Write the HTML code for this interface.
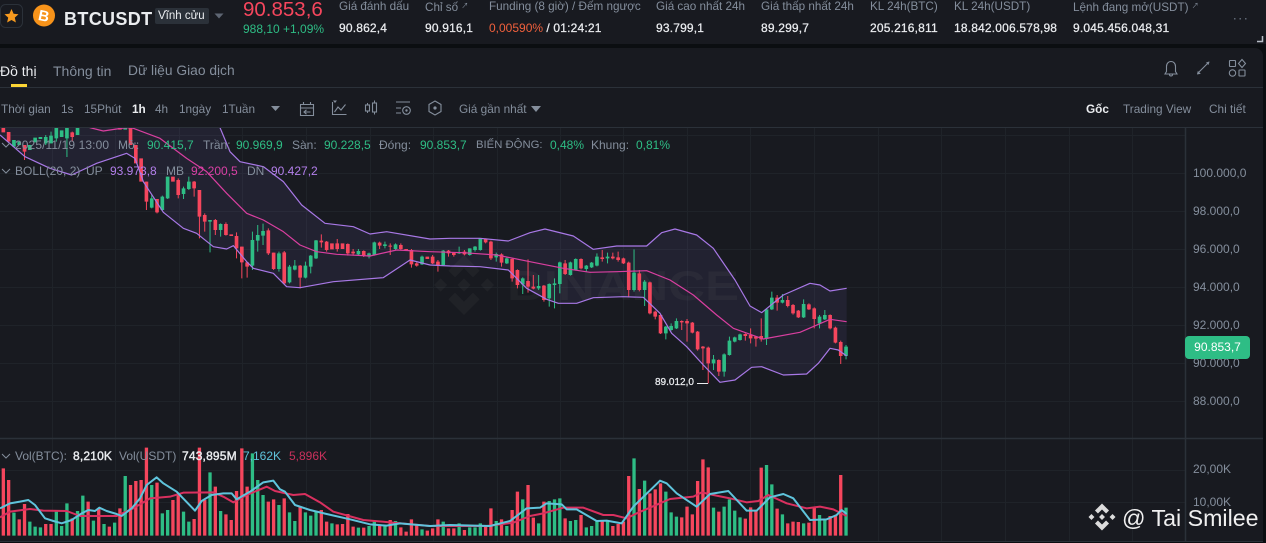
<!DOCTYPE html>
<html lang="vi"><head><meta charset="utf-8"><title>BTCUSDT</title>
<style>
*{box-sizing:border-box}
html,body{margin:0;padding:0;width:1266px;height:543px;overflow:hidden;background:#0b0e11}
body{position:relative;font-family:"Liberation Sans","Noto Sans CJK SC",sans-serif;font-size:12px;color:#848e9c}
.t{position:absolute;white-space:nowrap;line-height:14px;height:14px}
.l{font-size:11.7px}
.k{font-size:11.8px}
.w{color:#eaecef}
.g{color:#2ebd85}.r{color:#f6465d}.p{color:#b37feb}.m{color:#d940a5}
.v{color:#eaecef;-webkit-text-stroke:.25px #eaecef;letter-spacing:.18px}
#top{position:absolute;left:0;top:0;width:1266px;height:44px;background:#181a20}
#panel{position:absolute;left:0;top:48px;width:1263px;height:493px;background:#181a20;border-top-right-radius:8px}
.hl{position:absolute;left:0;width:1263px;height:1px;background:#2b3139}
svg{position:absolute;left:0;top:0}
</style></head><body>
<div id="top"></div><div id="panel"></div>
<div class="hl" style="top:87px"></div>
<div class="hl" style="top:127px"></div>

<svg width="1266" height="543" viewBox="0 0 1266 543" style="z-index:1">
<defs><clipPath id="c"><rect x="0" y="128" width="1185" height="310"/></clipPath></defs>
<g stroke="#1f2329" stroke-width="1" fill="none">
<path d="M52.5 128V541M115.5 128V541M179.5 128V541M242.5 128V541M306.5 128V541M370.5 128V541M433.5 128V541M497.5 128V541M560.5 128V541M623.5 128V541M687.5 128V541M750.5 128V541M814.5 128V541M878.5 128V541M941.5 128V541M1005.5 128V541M1069.5 128V541M1132.5 128V541"/>
<path d="M0 135.5H1185M0 173.5H1185M0 211.5H1185M0 249.5H1185M0 287.5H1185M0 325.5H1185M0 363.5H1185M0 401.5H1185M0 470.5H1185M0 502.5H1185"/>
</g>
<path d="M1185.5 128V541M0 438.5H1263" stroke="#2b3139" stroke-width="1.5" fill="none"/>
<path d="M0 541.5H1263" stroke="#2b3139" stroke-width="1" fill="none"/>
<!-- chart watermark -->
<g fill="#ffffff" fill-opacity=".035">
<path transform="translate(464,285) scale(.6)" d="M0-11 11 0 0 11-11 0ZM-50 0-39-11-28 0-39 11ZM50 0 39-11 28 0 39 11ZM0-50 26-24 15-13 0-28-15-13-26-24ZM0 50 26 24 15 13 0 28-15 13-26 24Z"/>
<text x="507" y="300" font-family="Liberation Sans" font-weight="700" font-size="42" textLength="232" lengthAdjust="spacingAndGlyphs">BINANCE</text>
</g>
<g clip-path="url(#c)">
<g transform="translate(0,125) scale(.33333)">
<path fill="#9b7fe8" fill-opacity=".085" d="M0 0H640L660 8 690 80 720 110 790 125 850 170 905 240 975 295 1060 305 1110 327 1160 320 1290 342 1350 340 1440 340 1525 348 1590 323 1635 312 1720 333 1780 373 1850 363 1940 363 1985 323 2025 312 2090 330 2140 370 2205 465 2250 543 2285 563 2350 510 2430 475 2460 480 2490 498 2540 490V693L2515 675 2490 670 2455 715 2420 747 2350 750 2285 725 2255 727 2205 765 2160 772 2110 720 2060 665 2015 625 1980 565 1930 517 1870 515 1780 518 1730 535 1675 535 1640 523 1580 490 1525 435 1440 425 1350 423 1290 420 1230 405 1200 425 1150 458 1000 470 900 488 860 485 820 445 760 430 740 410 700 362 680 372 640 365 590 325 550 310 490 262 430 170 405 100 380 85 290 115 215 150 150 130 75 95 0 30Z"/>
</g>
<!-- candles left -->
<g transform="translate(3.33,125) scale(.33125,.33333)" fill="none">
<path stroke="#2ebd85" stroke-width="3" d="M144 20V55M192 8V96M160 8V50M128 30V60M448 210V250M480 212V258M496 155V222M544 185V222M560 155V195M624 285V382M656 295V335M752 320V435M768 300V380M784 296V360M832 380V440M864 420V475M880 405V436M912 410V460M928 390V445M944 345V402M1072 372V390M1104 383V400M1120 350V392M1152 350V370M1184 355V375M1264 392V420"/>
<path stroke="#2ebd85" stroke-width="11" d="M32 45V65M48 50V60M80 60V75M96 38V52M112 36V42M128 36V55M144 32V55M160 8V40M176 16V36M192 8V40M224 8V30M368 8V14M448 220V248M480 215V255M496 155V220M544 190V207M560 170V192M624 285V290M656 297V315M752 345V422M768 330V347M784 318V332M832 385V432M864 425V472M880 422V434M912 422V458M928 392V425M944 346V400M1072 378V388M1104 385V395M1120 352V390M1152 358V363M1184 358V372M1264 395V418"/>
<path stroke="#f6465d" stroke-width="3" d="M64 60V105M208 20V50M432 170V255M464 222V265M528 160V220M576 168V215M592 195V340M608 265V320M640 282V330M672 292V332M704 322V400M720 365V460M736 410V458M800 310V390M816 383V435M848 378V478M896 420V490M960 328V368M976 348V380M1008 342V380M1040 355V392M1056 372V392M1088 376V396M1136 350V372M1168 355V390M1200 355V375M1232 372V428M1248 412V425"/>
<path stroke="#f6465d" stroke-width="11" d="M0 8V22M16 21V50M64 60V80M208 22V36M352 8V14M384 8V60M400 60V115M416 100V170M432 170V230M464 222V262M512 155V170M528 165V210M576 170V190M592 195V275M608 270V290M640 285V315M672 297V330M688 328V333M704 333V370M720 365V412M736 412V425M800 316V385M816 383V432M848 382V475M896 422V458M960 347V352M976 350V375M992 355V373M1008 355V372M1024 355V372M1040 357V385M1056 380V385M1088 378V393M1136 353V362M1168 362V365M1200 360V372M1216 372V378M1232 375V418M1248 415V422M1280 395V402"/>
</g>
<!-- candles right -->
<g transform="translate(432.63,220) scale(.33125,.33333)" fill="none">
<path stroke="#2ebd85" stroke-width="3" d="M32 90V137M80 80V102M112 85V107M128 78V95M144 55V92M192 98V125M224 110V132M272 172V222M320 165V210M352 190V260M368 175V265M384 125V220M416 125V167M432 115V152M464 135V155M480 126V144M496 100V139M528 98V130M608 88V215M640 180V258M704 318V358M720 310V332M736 295V327M848 405V450M880 400V470M896 350V407M912 350V367M928 341V362M1008 266V375M1024 215V270M1056 222V250M1120 238V294M1168 285V325M1184 270V300M1248 375V418"/>
<path stroke="#2ebd85" stroke-width="11" d="M32 92V135M80 97V100M112 85V105M128 80V90M144 55V90M192 102V112M224 115V130M272 175V193M320 198V205M352 192V235M368 190V195M384 127V192M416 127V165M432 117V150M464 137V147M480 128V142M496 110V137M528 110V115M608 158V210M640 185V210M704 320V340M720 318V330M736 303V325M848 418V430M880 403V455M896 362V405M912 352V365M928 343V360M1008 268V357M1024 233V268M1056 240V248M1120 252V292M1168 290V310M1184 285V298M1248 380V408"/>
<path stroke="#f6465d" stroke-width="3" d="M0 105V132M16 120V155M48 90V110M64 96V110M96 90V106M160 55V70M176 62V120M208 100V140M240 115V185M256 148V205M288 118V218M304 165V208M336 195V245M400 120V165M448 115V148M512 90V125M544 98V118M560 95V125M576 113V132M592 125V232M624 150V214M656 185V283M672 272V298M688 282V342M752 301V330M768 297V365M784 306V340M800 333V392M816 378V450M832 380V490M864 418V468M944 340V362M960 325V370M976 348V380M992 295V365M1040 225V272M1072 228V262M1088 252V284M1104 270V294M1136 250V270M1152 262V325M1200 283V328M1216 320V370M1232 362V432"/>
<path stroke="#f6465d" stroke-width="11" d="M0 110V130M16 125V135M48 92V100M64 98V105M96 95V103M160 57V67M176 65V115M208 103V128M240 117V175M256 150V195M288 183V200M304 200V206M336 197V240M400 130V162M448 117V145M512 112V117M544 110V115M560 112V120M576 115V130M592 128V210M624 160V210M656 187V280M672 275V290M688 285V340M752 303V307M768 303V310M784 308V338M800 335V388M816 380V385M832 383V430M864 420V455M944 342V348M960 345V355M976 350V356M992 348V358M1040 233V248M1072 240V258M1088 255V280M1104 272V292M1136 253V268M1152 265V297M1200 285V325M1216 323V368M1232 366V408"/>
</g>
<!-- bollinger -->
<g transform="translate(0,125) scale(.33333)" fill="none" stroke-width="3.6" stroke-linejoin="round">
<path stroke="#a878e6" d="M640-20 660 8 690 80 720 110 790 125 850 170 905 240 975 295 1060 305 1110 327 1160 320 1290 342 1350 340 1440 340 1525 348 1590 323 1635 312 1720 333 1780 373 1850 363 1940 363 1985 323 2025 312 2090 330 2140 370 2205 465 2250 543 2285 563 2350 510 2430 475 2460 480 2490 498 2540 490"/>
<path stroke="#a878e6" d="M0 30 75 95 150 130 215 150 290 115 380 85 405 100 430 170 490 262 550 310 590 325 640 365 680 372 700 362 740 410 760 430 820 445 860 485 900 488 1000 470 1150 458 1200 425 1230 405 1290 420 1350 423 1440 425 1525 435 1580 490 1640 523 1675 535 1730 535 1780 518 1870 515 1930 517 1980 565 2015 625 2060 665 2110 720 2160 772 2205 765 2255 727 2285 725 2350 750 2420 747 2455 715 2490 670 2515 675 2540 693"/>
<path stroke="#d93fa0" d="M240-5 270 8 310 18 350 12 380 8 400 10 480 40 560 100 620 140 680 205 740 265 790 285 850 320 900 360 950 380 1010 388 1110 393 1190 375 1290 380 1390 383 1490 390 1590 410 1690 430 1770 442 1850 440 1940 437 2010 465 2080 510 2150 570 2200 610 2290 642 2400 622 2490 583 2540 590"/>
</g>
</g>
<!-- volume -->
<g transform="translate(3.33,440) scale(.33125,.33333)" fill="none" stroke-width="10">
<path stroke="#2ebd85" d="M32 218V287M80 245V287M96 260V287M112 262V287M160 215V287M176 258V287M192 190V287M224 213V287M240 167V287M272 242V287M304 252V287M336 248V287M368 108V287M448 135V287M480 220V287M496 210V287M544 215V287M560 245V287M624 97V287M656 213V287M752 40V287M768 120V287M784 165V287M832 195V287M864 217V287M880 243V287M912 217V287M928 227V287M944 215V287M992 250V287M1072 263V287M1104 258V287M1120 245V287M1152 255V287M1184 243V287M1264 268V287"/>
<path stroke="#f6465d" d="M0 85V287M16 120V287M48 238V287M64 192V287M128 252V287M144 252V287M208 235V287M256 185V287M288 205V287M320 260V287M352 205V287M384 135V287M400 123V287M416 120V287M432 23V287M464 128V287M512 180V287M528 160V287M576 237V287M592 23V287M608 180V287M640 140V287M672 223V287M688 240V287M704 153V287M720 25V287M736 140V287M800 185V287M816 178V287M848 175V287M896 200V287M960 210V287M976 245V287M1008 253V287M1024 252V287M1040 222V287M1056 260V287M1088 263V287M1136 255V287M1168 240V287M1200 262V287M1216 275V287M1232 238V287M1248 252V287M1280 272V287"/>
</g>
<g transform="translate(432.63,440) scale(.33125,.33333)" fill="none" stroke-width="10">
<path stroke="#2ebd85" d="M32 245V287M80 250V287M112 262V287M128 262V287M144 250V287M192 243V287M224 258V287M272 178V287M320 250V287M352 183V287M368 178V287M384 175V287M416 243V287M432 240V287M464 262V287M480 258V287M496 243V287M528 243V287M608 55V287M640 122V287M704 155V287M720 217V287M736 230V287M848 203V287M880 200V287M896 178V287M912 212V287M928 232V287M1008 75V287M1024 133V287M1056 223V287M1120 250V287M1168 225V287M1184 240V287M1248 203V287"/>
<path stroke="#f6465d" d="M0 265V287M16 238V287M48 265V287M64 265V287M96 270V287M160 260V287M176 205V287M208 238V287M240 210V287M256 155V287M288 135V287M304 233V287M336 185V287M400 235V287M448 225V287M512 242V287M544 258V287M560 252V287M576 245V287M592 108V287M624 147V287M656 160V287M672 148V287M688 130V287M752 232V287M768 200V287M784 223V287M800 123V287M816 58V287M832 82V287M864 215V287M944 236V287M960 202V287M976 212V287M992 83V287M1040 206V287M1072 250V287M1088 245V287M1104 246V287M1136 248V287M1152 203V287M1200 228V287M1216 228V287M1232 105V287"/>
</g>
<g transform="translate(0,440) scale(.33333)" fill="none" stroke-width="6" stroke-linejoin="round">
<path stroke="#d9305f" d="M0 232 30 215 90 207 130 212 200 213 240 228 350 228 400 205 450 175 510 170 550 158 640 157 670 170 700 187 740 165 800 140 825 153 880 165 915 162 960 187 1000 215 1090 240 1170 247 1290 258 1390 258 1460 258 1540 248 1590 228 1630 220 1690 203 1750 203 1810 225 1840 225 1880 235 1910 220 1980 190 2010 177 2080 170 2105 157 2140 165 2190 175 2240 187 2275 183 2305 165 2360 190 2420 205 2460 200 2500 208 2540 228"/>
<path stroke="#5fc4dc" d="M0 205 30 190 60 185 85 180 105 195 135 235 160 243 185 250 215 240 245 220 265 210 285 213 298 203 320 213 350 222 365 228 395 205 420 175 440 135 470 112 490 130 530 155 585 212 605 183 635 165 670 160 695 160 710 178 750 155 790 127 820 122 840 148 855 155 885 195 930 210 980 222 1050 238 1110 253 1160 257 1200 250 1290 258 1350 255 1470 258 1530 243 1580 205 1620 203 1640 190 1685 193 1700 208 1730 208 1790 243 1820 242 1865 250 1900 200 1980 122 2000 130 2030 160 2090 200 2130 162 2185 153 2240 212 2270 212 2310 172 2350 162 2380 175 2430 240 2480 238 2510 225 2525 210 2540 222"/>
</g>
<!-- low marker -->
<path d="M697 383.5H708" stroke="#eaecef" stroke-width="1"/>
<!-- header icons -->
<rect x=".5" y="4.5" width="22" height="23" rx="5" fill="#181a20" stroke="#2b3139"/>
<polygon points="11.5,9 13.6,13.8 18.5,14.3 14.8,17.6 15.9,22.5 11.5,20 7.1,22.5 8.2,17.6 4.5,14.3 9.4,13.8" fill="#f79a1e"/>
<circle cx="44" cy="15.5" r="11" fill="#f7931a"/>
<text x="44" y="21" text-anchor="middle" font-family="Liberation Sans" font-weight="700" font-size="15" fill="#fff" transform="rotate(12 44 15.5)">B</text>
<path d="M214.5 13.5H223.5L219 18.5Z" fill="#5e6673"/>
<path d="M1234 18h1.500v1.500h-1.500zM1239.500 18h1.500v1.500h-1.500zM1245 18h1.500v1.500h-1.500z" fill="#5e6673"/>
<path d="M1257 41.500H1262.500V36" stroke="#b7bdc6" stroke-width="1.5" fill="none"/>
<!-- top right icons -->
<g stroke="#848e9c" stroke-width="1.1" fill="none">
<path d="M1165 74H1177L1175.500 71.500V66.500C1175.500 63.500 1173.500 61.500 1171 61.500S1166.500 63.500 1166.500 66.500V71.500ZM1169.500 74.500C1169.500 76.500 1172.500 76.500 1172.500 74.500"/>
<path d="M1197.500 73.500 1209 62"/>
<rect x="1229.5" y="60.5" width="6" height="6" rx=".5"/>
<path d="M1242 59.500 1245.500 63.500 1242 67.500 1238.500 63.500Z"/>
<circle cx="1232.500" cy="73" r="3.2"/>
<rect x="1239" y="70" width="6" height="6" rx=".5"/>
</g>
<path d="M1206 62.500 1209.500 61.500 1208.500 65ZM1197 74.500 1197.800 71 1200.800 73.800Z" fill="#848e9c"/>
<!-- toolbar icons -->
<g stroke="#848e9c" stroke-width="1.1" fill="none">
<path d="M300.500 104.500H313.500V115.500H300.500ZM300.500 108H313.500M303.500 102V105M310.500 102V105M310.500 112H304M306.500 109.800 304 112 306.500 114.200"/>
<path d="M332.500 102V114.500H346.500M334.500 112 338 107 341 110 345.500 104.500"/>
<path d="M367.500 103V113M374.500 100.500V114.500" stroke-width="1"/>
<rect x="365.5" y="105" width="4" height="6" fill="#181a20"/>
<rect x="372.5" y="103" width="4" height="9" fill="#181a20"/>
<path d="M396 102H410M396 108H401M396 113H401"/>
<circle cx="406.5" cy="110.5" r="3.8"/>
<path d="M435 101 441 104.500V111.500L435 115 429 111.500V104.500Z"/>
</g>
<circle cx="406.5" cy="110.5" r="1.2" fill="#848e9c"/>
<circle cx="435" cy="108" r="1.6" fill="#848e9c"/>
<path d="M333 100.500H337L335 103Z" fill="#848e9c"/>
<path d="M271 106H280L275.500 111ZM531 106H541L536 112Z" fill="#848e9c"/>
<!-- chevrons -->
<g stroke="#848e9c" stroke-width="1" fill="none">
<path d="M2 143 6 147 10 143M2 169 6 173 10 169M2 454 6 458 10 454"/>
</g>
<!-- brand watermark -->
<path transform="translate(1102,517) scale(.27)" fill="#dcdcdc" d="M0-11 11 0 0 11-11 0ZM-50 0-39-11-28 0-39 11ZM50 0 39-11 28 0 39 11ZM0-50 26-24 15-13 0-28-15-13-26-24ZM0 50 26 24 15 13 0 28-15 13-26 24Z"/>
</svg>

<div style="position:absolute;left:0;top:0;z-index:2;width:1266px;height:543px">
<div class="t" style="left:64px;top:9px;height:20px;line-height:20px;font-size:18px;font-weight:700;color:#eaecef;letter-spacing:.35px">BTCUSDT</div>
<div class="t w" style="left:155px;top:8px;width:54px;height:16px;line-height:16px;background:#2b3139;border-radius:2px;padding-left:3px;font-size:11.5px">Vĩnh cửu</div>
<div class="t r" style="left:243px;top:-1px;height:22px;line-height:22px;font-size:20.5px">90.853,6</div>
<div class="t g" style="left:243px;top:22px">988,10 +1,09%</div>

<div class="t l" style="left:339px;top:0">Giá đánh dấu</div>
<div class="t v" style="left:339px;top:21px">90.862,4</div>
<div class="t l" style="left:425px;top:0">Chỉ số <span style="font-size:7px;vertical-align:3px">↗</span></div>
<div class="t v" style="left:425px;top:21px">90.916,1</div>
<div class="t l" style="left:489px;top:0">Funding (8 giờ) / Đếm ngược</div>
<div class="t" style="left:489px;top:21px"><span style="color:#f0603c">0,00590%</span> <span class="v">/ 01:24:21</span></div>
<div class="t l" style="left:656px;top:0">Giá cao nhất 24h</div>
<div class="t v" style="left:656px;top:21px">93.799,1</div>
<div class="t l" style="left:761px;top:0">Giá thấp nhất 24h</div>
<div class="t v" style="left:761px;top:21px">89.299,7</div>
<div class="t l" style="left:870px;top:0">KL 24h(BTC)</div>
<div class="t v" style="left:870px;top:21px">205.216,811</div>
<div class="t l" style="left:954px;top:0">KL 24h(USDT)</div>
<div class="t v" style="left:954px;top:21px">18.842.006.578,98</div>
<div class="t l" style="left:1073px;top:0">Lệnh đang mở(USDT) <span style="font-size:7px;vertical-align:3px">↗</span></div>
<div class="t v" style="left:1073px;top:21px">9.045.456.048,31</div>

<div class="t w" style="left:0;top:63px;height:16px;line-height:16px;font-size:14px">Đồ thị</div>
<div style="position:absolute;left:11px;top:84px;width:16px;height:3px;background:#fcd535"></div>
<div class="t" style="left:53px;top:63px;height:16px;line-height:16px;font-size:14px">Thông tin</div>
<div class="t" style="left:128px;top:63px;height:16px;line-height:16px;font-size:13.8px">Dữ liệu Giao dịch</div>

<div class="t k" style="left:1px;top:102px">Thời gian</div>
<div class="t k" style="left:61px;top:102px">1s</div>
<div class="t k" style="left:84px;top:102px">15Phút</div>
<div class="t w k" style="left:132px;top:102px;font-weight:700">1h</div>
<div class="t k" style="left:155px;top:102px">4h</div>
<div class="t k" style="left:179px;top:102px">1ngày</div>
<div class="t k" style="left:222px;top:102px">1Tuần</div>
<div class="t k" style="left:459px;top:102px">Giá gần nhất</div>
<div class="t w k" style="left:1086px;top:102px;font-weight:700">Gốc</div>
<div class="t k" style="left:1123px;top:102px">Trading View</div>
<div class="t k" style="left:1209px;top:102px">Chi tiết</div>

<div class="t" style="left:15px;top:138px;letter-spacing:.1px">2025/11/19 13:00</div>
<div class="t" style="left:118px;top:138px">Mở:</div><div class="t g" style="left:147px;top:138px">90.415,7</div>
<div class="t" style="left:203px;top:138px">Trần:</div><div class="t g" style="left:236px;top:138px">90.969,9</div>
<div class="t" style="left:292px;top:138px">Sàn:</div><div class="t g" style="left:324px;top:138px">90.228,5</div>
<div class="t" style="left:379px;top:138px">Đóng:</div><div class="t g" style="left:420px;top:138px">90.853,7</div>
<div class="t" style="left:476px;top:138px;font-size:11.3px;line-height:15px">BIẾN ĐỘNG:</div><div class="t g" style="left:550px;top:138px">0,48%</div>
<div class="t" style="left:591px;top:138px">Khung:</div><div class="t g" style="left:636px;top:138px">0,81%</div>

<div class="t" style="left:15px;top:164px">BOLL(20, 2)</div>
<div class="t" style="left:86px;top:164px">UP</div><div class="t p" style="left:110px;top:164px">93.973,8</div>
<div class="t" style="left:166px;top:164px">MB</div><div class="t m" style="left:191px;top:164px">92.200,5</div>
<div class="t" style="left:247px;top:164px">DN</div><div class="t p" style="left:271px;top:164px">90.427,2</div>

<div class="t" style="left:15px;top:449px">Vol(BTC):</div><div class="t v" style="left:73px;top:449px;-webkit-text-stroke-width:.4px">8,210K</div>
<div class="t" style="left:119px;top:449px">Vol(USDT)</div><div class="t v" style="left:182px;top:449px;-webkit-text-stroke-width:.4px">743,895M</div>
<div class="t" style="left:243px;top:449px;color:#5fc4dc">7,162K</div>
<div class="t" style="left:289px;top:449px;color:#c9315c">5,896K</div>

<div class="t" style="left:1193px;top:166px">100.000,0</div>
<div class="t" style="left:1193px;top:204px">98.000,0</div>
<div class="t" style="left:1193px;top:242px">96.000,0</div>
<div class="t" style="left:1193px;top:280px">94.000,0</div>
<div class="t" style="left:1193px;top:318px">92.000,0</div>
<div class="t" style="left:1193px;top:356px">90.000,0</div>
<div class="t" style="left:1193px;top:394px">88.000,0</div>
<div class="t" style="left:1193px;top:462px">20,00K</div>
<div class="t" style="left:1193px;top:495px">10,00K</div>

<div class="t" style="left:1185px;top:336px;width:65px;height:23px;line-height:23px;background:#2ebd85;border-radius:4px;color:#fff;text-align:center">90.853,7</div>
<div class="t" style="left:655px;top:376px;font-size:10px;color:#eaecef;-webkit-text-stroke:.25px #eaecef">89.012,0</div>
<div class="t" style="left:1122px;top:504px;height:28px;line-height:28px;font-size:23.2px;color:#f0f0f0">@ Tai Smilee</div>
</div>
</body></html>
